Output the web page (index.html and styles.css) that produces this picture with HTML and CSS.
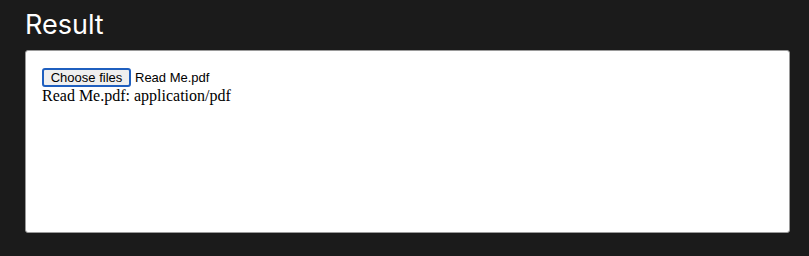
FILE: index.html
```html
<!DOCTYPE html>
<html>
<head>
<meta charset="utf-8">
<link rel="stylesheet" href="styles.css">
</head>
<body>
<h2 class="title">Result</h2>
<div class="frame">
  <div class="picker">
    <span class="btn">Choose files</span>
    <span class="fname">Read Me.pdf</span>
  </div>
  <div class="output">Read Me.pdf: application/pdf</div>
</div>
</body>
</html>
```
FILE: styles.css
```css
html, body {
  margin: 0;
  padding: 0;
  background: #1b1b1b;
}
body {
  padding: 0 19px 0 25px;
  height: 256px;
  box-sizing: border-box;
}
.title {
  margin: 0;
  padding-top: 9px;
  height: 50px;
  box-sizing: border-box;
  font-family: Inter, sans-serif;
  font-weight: 400;
  font-size: 27px;
  line-height: 32px;
  color: #ffffff;
}
.frame {
  background: #ffffff;
  border: 1px solid #9a9a9a;
  border-radius: 3px;
  height: 183px;
  box-sizing: border-box;
  padding: 17px 16px;
}
.picker {
  display: flex;
  align-items: center;
  height: 19px;
  font-family: "Liberation Sans", Arial, sans-serif;
  font-size: 13px;
  color: #000;
}
.btn {
  display: inline-flex;
  align-items: center;
  justify-content: center;
  height: 19px;
  width: 89px;
  box-sizing: border-box;
  border: 2px solid #1f5fbf;
  border-radius: 3px;
  background: #efefef;
  color: #000;
}
.fname {
  margin-left: 4px;
}
.output {
  font-family: "Liberation Serif", "Times New Roman", serif;
  font-size: 16px;
  line-height: 18px;
  color: #000;
}
```
